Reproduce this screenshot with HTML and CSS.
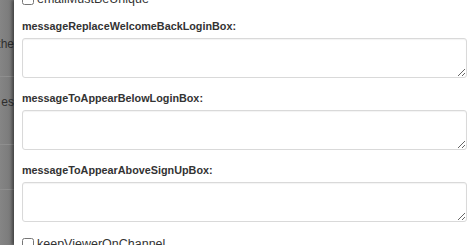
FILE: index.html
```html
<!DOCTYPE html>
<html>
<head>
    <title>Settings</title>
    <meta http-equiv="Content-Type" content="text/html; charset=utf-8" />
    <link rel="stylesheet" href="styles.css">
</head>
<body>
<div class="page">
    <div class="page-row row-a"><span>the</span></div>
    <div class="page-row row-b"><span>es</span></div>
    <div class="page-row row-c"></div>
    <div class="page-row row-d"></div>
</div>

<!-- Модальное окно настроек -->
<div class="modal">
    <div class="modal-body">
        <label class="check-row"><input type="checkbox"> emailMustBeUnique</label>

        <div class="field">
            <label class="field-label">messageReplaceWelcomeBackLoginBox:</label>
            <textarea class="field-input"></textarea>
        </div>

        <div class="field">
            <label class="field-label">messageToAppearBelowLoginBox:</label>
            <textarea class="field-input"></textarea>
        </div>

        <div class="field">
            <label class="field-label">messageToAppearAboveSignUpBox:</label>
            <textarea class="field-input"></textarea>
        </div>

        <label class="check-row"><input type="checkbox"> keepViewerOnChannel</label>
    </div>
</div>
</body>
</html>
```

FILE: styles.css
```css
html, body {margin: 0; height: 100%; overflow: hidden;}
body{
    display: flex;
    font-family: "Liberation Sans", Arial, sans-serif;
    color: #333;
}
.page{
    width: 14px;
    flex-shrink: 0;
    background: linear-gradient(to right, #858585, #777);
    display: flex;
    flex-flow: column;
    overflow: hidden;
}
.page-row{
    display: flex;
    align-items: center;
    justify-content: flex-end;
    border-bottom: 1px solid #8e8e8e;
    font-size: 12px;
    color: #2e2e2e;
    white-space: nowrap;
}
.row-a{height: 76px; align-items: flex-start;}
.row-a span{margin-top: 37px;}
.row-b{height: 67px; align-items: flex-start;}
.row-b span{margin-top: 18px;}
.row-c{height: 44px;}
.row-d{flex: 1; border-bottom: none;}

.modal{
    flex: 1;
    background: white;
    box-shadow: -2px 0 3px rgba(0, 0, 0, 0.45);
    overflow: hidden;
}
.modal-body{
    padding: 0 7px 0 8px;
    margin-top: -9px;
}
.check-row{
    display: flex;
    align-items: center;
    font-size: 12.5px;
    height: 15px;
    color: #333;
}
.check-row input{
    margin: 0 3px 0 0;
    width: 12px;
    height: 12px;
}
.check-row:first-child{
    margin-bottom: 14px;
}
.field{
    margin-bottom: 14px;
}
.field-label{
    display: block;
    font-weight: bold;
    font-size: 10.8px;
    line-height: 13px;
    margin-bottom: 5px;
    color: #333;
}
.field-input{
    display: block;
    box-sizing: border-box;
    width: 100%;
    height: 40px;
    margin: 0;
    border: 1px solid #d9d9d9;
    border-radius: 3px;
    box-shadow: inset 0 1px 1px rgba(0, 0, 0, 0.05);
    resize: vertical;
    font-family: "Liberation Sans", Arial, sans-serif;
}
```
